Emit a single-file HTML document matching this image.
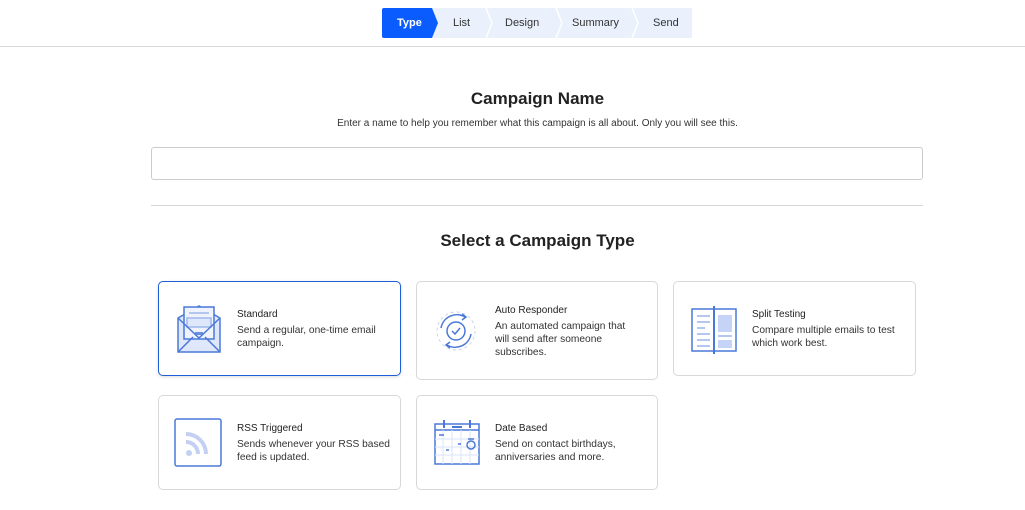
<!DOCTYPE html>
<html><head><style>
body{margin:0;width:1025px;height:510px;background:#fff;font-family:"Liberation Sans",sans-serif;color:#222;position:relative;overflow:hidden}
.abs{position:absolute}
.step{position:absolute;top:8px;height:30px;line-height:30px;font-size:11px;color:#333}
.card{position:absolute;border:1px solid #d6d8dc;border-radius:5px;background:#fff;box-sizing:border-box}
.card .t{position:absolute;left:78px;font-size:10px;color:#222}
.card .d{position:absolute;left:78px;font-size:10.2px;line-height:13px;color:#333;width:145px}
.card svg{position:absolute}
</style></head><body>
<div class="abs" style="left:382px;top:8px;width:310px;height:30px;background:#eaf0fc"></div>
<svg class="abs" style="left:382px;top:8px" width="310" height="30">
<path d="M0 2 Q0 0 2 0 H50 L56 15 L50 30 H2 Q0 30 0 28Z" fill="#0a5cff"/>
<path d="M104 0 L110 15 L104 30 M174 0 L180 15 L174 30 M250 0 L256 15 L250 30" stroke="#fff" fill="none" stroke-width="1.5"/>
</svg>
<div class="step" style="left:397px;color:#fff;font-weight:bold">Type</div>
<div class="step" style="left:453px">List</div>
<div class="step" style="left:505px">Design</div>
<div class="step" style="left:572px">Summary</div>
<div class="step" style="left:653px">Send</div>
<div class="abs" style="left:0;top:46px;width:1025px;height:1px;background:#d9d9d9"></div>
<div class="abs" style="left:0;top:89px;width:1075px;text-align:center;font-size:17px;font-weight:bold;color:#222">Campaign Name</div>
<div class="abs" style="left:0;top:118px;width:1075px;text-align:center;font-size:10px;color:#333">Enter a name to help you remember what this campaign is all about. Only you will see this.</div>
<div class="abs" style="left:151px;top:147px;width:770px;height:31px;border:1px solid #ccc;border-radius:3px"></div>
<div class="abs" style="left:151px;top:205px;width:772px;height:1px;background:#d6d6d6"></div>
<div class="abs" style="left:0;top:231px;width:1075px;text-align:center;font-size:17px;font-weight:bold;color:#222">Select a Campaign Type</div>

<div class="card" style="left:158px;top:281px;width:243px;height:95px;border-color:#1d5fd6;box-shadow:0 1px 3px rgba(0,0,0,.15)">
<svg style="left:17px;top:22px" width="46" height="50" viewBox="0 0 46 50"><path d="M2 14 L23 2 L44 14 V48 H2Z" fill="#dfe8fb" stroke="#4a78d8" stroke-width="1.5"/><rect x="8" y="3" width="30" height="32" fill="#eef3fd" stroke="#4a78d8" stroke-width="1.5"/><path d="M13 9H33" stroke="#9fb7ec" stroke-width="1.5"/><rect x="11" y="14" width="24" height="9" fill="#dfe8fb" stroke="#9fb7ec" stroke-width="1.5"/><rect x="19" y="28" width="8" height="3" fill="#6a8fe0"/><path d="M2 14 L23 34 L44 14 M2 48 L17 33 M44 48 L29 33" stroke="#4a78d8" fill="none" stroke-width="1.5"/></svg>
<div class="t" style="top:27px">Standard</div><div class="d" style="top:42px">Send a regular, one-time email campaign.</div></div>

<div class="card" style="left:416px;top:281px;width:242px;height:99px">
<svg style="left:18px;top:28px" width="42" height="42" viewBox="0 0 42 42"><circle cx="21" cy="21" r="19" fill="none" stroke="#c9d4ee" stroke-dasharray="3 3"/><path d="M6 18 A16 16 0 0 1 30 7 M36 24 A16 16 0 0 1 12 35" fill="none" stroke="#4a78d8" stroke-width="1.5"/><path d="M27 4 L31 7 L27 10 M15 32 L11 35 L15 38" fill="none" stroke="#4a78d8" stroke-width="1.5"/><circle cx="21" cy="21" r="9" fill="none" stroke="#4a78d8" stroke-width="1.5"/><path d="M17 21 L20 24 L25 18" fill="none" stroke="#4a78d8" stroke-width="1.5"/></svg>
<div class="t" style="top:23px">Auto Responder</div><div class="d" style="top:38px;width:135px">An automated campaign that will send after someone subscribes.</div></div>

<div class="card" style="left:673px;top:281px;width:243px;height:95px">
<svg style="left:17px;top:24px" width="46" height="48" viewBox="0 0 46 48"><rect x="1" y="3" width="44" height="42" fill="#fff" stroke="#4a78d8" stroke-width="1.5"/><path d="M23 0V48" stroke="#4a78d8" stroke-width="2"/><path d="M6 10H19M6 16H19M6 22H14M6 28H19M6 34H19M6 40H19" stroke="#b5c7f1" stroke-width="2"/><rect x="27" y="9" width="14" height="17" fill="#c4d3f6"/><path d="M27 30H41" stroke="#b5c7f1" stroke-width="2"/><rect x="27" y="34" width="14" height="8" fill="#c4d3f6"/></svg>
<div class="t" style="top:27px">Split Testing</div><div class="d" style="top:42px">Compare multiple emails to test which work best.</div></div>

<div class="card" style="left:158px;top:395px;width:243px;height:95px">
<svg style="left:15px;top:22px" width="48" height="49" viewBox="0 0 48 49"><rect x="1" y="1" width="46" height="47" rx="2" fill="#fff" stroke="#4a78d8" stroke-width="1.5"/><circle cx="15" cy="35" r="3" fill="#c4d0f2"/><path d="M12 24 A12 12 0 0 1 24 36 M12 16 A20 20 0 0 1 32 36" fill="none" stroke="#c4d0f2" stroke-width="4"/></svg>
<div class="t" style="top:27px">RSS Triggered</div><div class="d" style="top:42px;width:158px">Sends whenever your RSS based feed is updated.</div></div>

<div class="card" style="left:416px;top:395px;width:242px;height:95px">
<svg style="left:17px;top:24px" width="46" height="46" viewBox="0 0 46 46"><rect x="1" y="4" width="44" height="40" fill="#fff" stroke="#4a78d8" stroke-width="1.5"/><path d="M1 10H45" stroke="#4a78d8" stroke-width="1.5"/><path d="M10 0V8M36 0V8M18 7H28" stroke="#4a78d8" stroke-width="2"/><path d="M9 10V44M18 10V44M27 10V44M36 10V44M1 19H45M1 27H45M1 35H45" stroke="#dbe3f8" stroke-width="1"/><path d="M5 15H10M12 30H15M24 24H27" stroke="#4a78d8" stroke-width="1.5"/><circle cx="37" cy="25" r="4" fill="none" stroke="#4a78d8" stroke-width="1.5"/><path d="M34 19H40" stroke="#4a78d8" stroke-width="1.5"/></svg>
<div class="t" style="top:27px">Date Based</div><div class="d" style="top:42px">Send on contact birthdays, anniversaries and more.</div></div>
</body></html>
